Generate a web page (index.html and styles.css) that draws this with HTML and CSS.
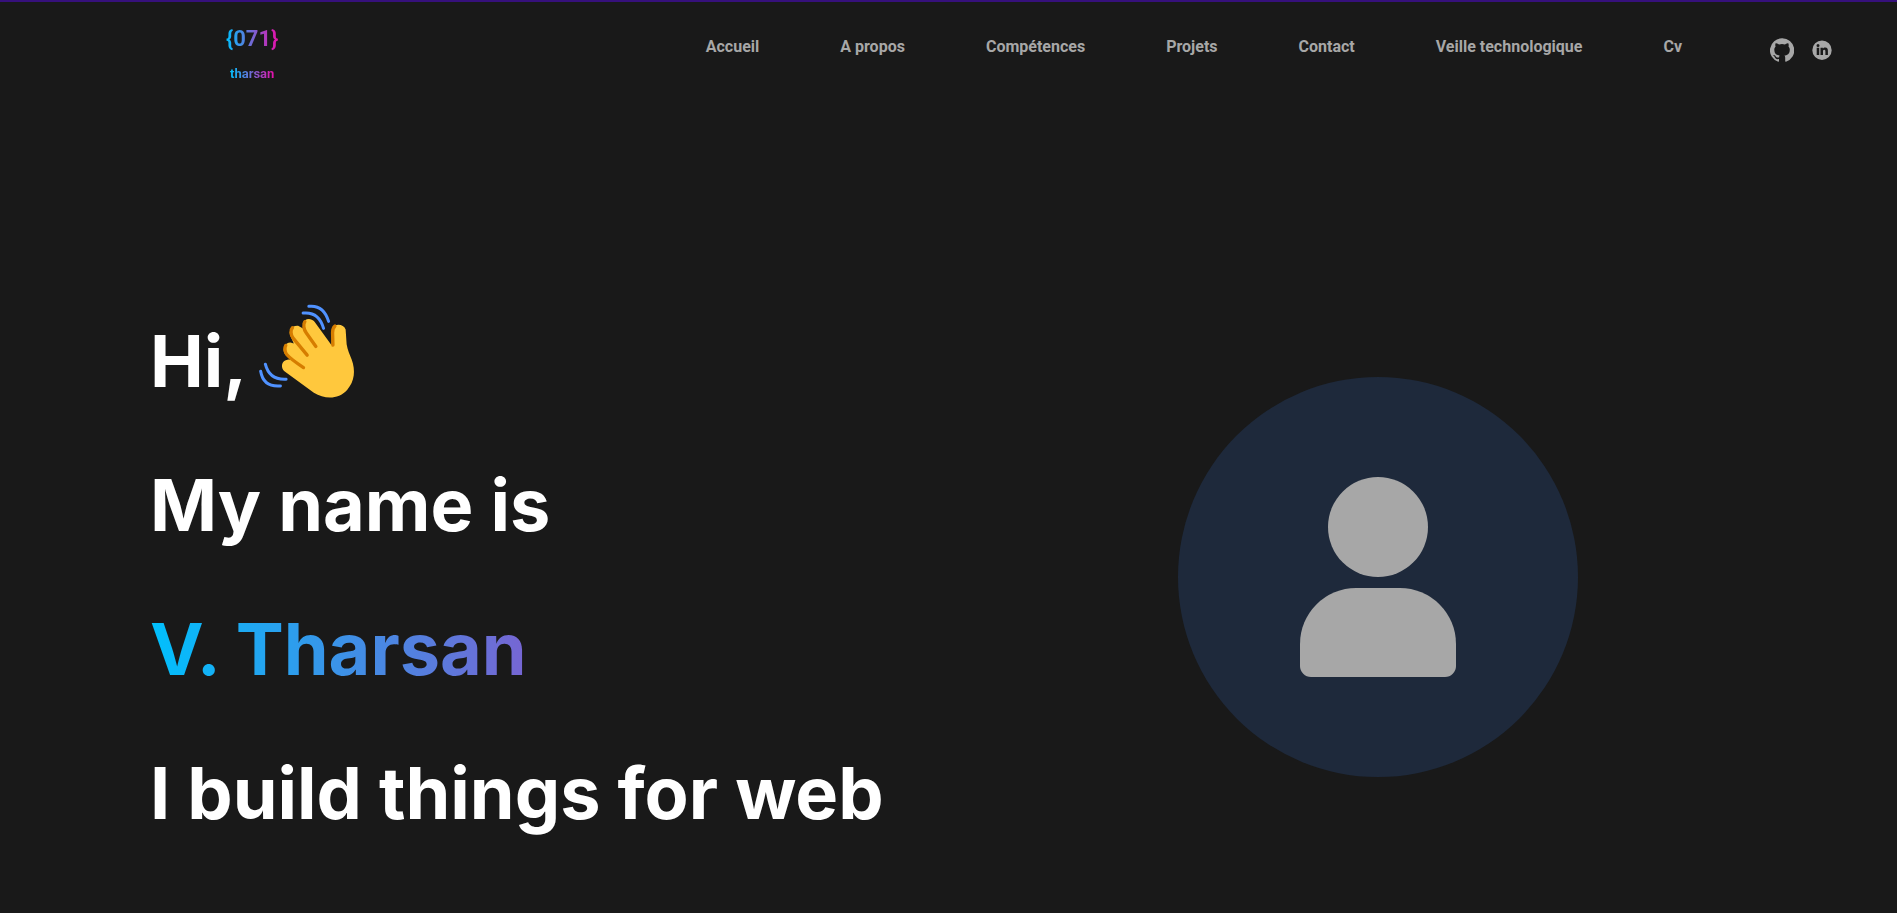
FILE: index.html
```html
<!DOCTYPE html>
<html lang="fr">
<head>
<meta charset="utf-8">
<meta name="viewport" content="width=device-width, initial-scale=1">
<title>V. Tharsan</title>
<link rel="stylesheet" href="styles.css">
</head>
<body>
<header class="header">
  <a class="logo" href="#">
    <span class="logo-mark">{071}</span>
    <span class="logo-name">tharsan</span>
  </a>
  <nav class="nav">
    <ul class="nav-list">
      <li><a href="#accueil">Accueil</a></li>
      <li><a href="#apropos">A propos</a></li>
      <li><a href="#competences">Compétences</a></li>
      <li><a href="#projets">Projets</a></li>
      <li><a href="#contact">Contact</a></li>
      <li><a href="#veille">Veille technologique</a></li>
      <li><a href="#cv">Cv</a></li>
    </ul>
    <div class="social">
      <a href="#github" aria-label="GitHub">
        <svg class="icon" viewBox="0 0 24 24"><path d="M12 .3a12 12 0 0 0-3.8 23.4c.6.1.8-.3.8-.6v-2c-3.3.7-4-1.6-4-1.6-.6-1.4-1.4-1.8-1.4-1.8-1-.7.1-.7.1-.7 1.2 0 1.9 1.2 1.9 1.2 1 1.8 2.8 1.3 3.5 1 0-.8.4-1.3.7-1.6-2.7-.3-5.5-1.3-5.5-6 0-1.2.5-2.3 1.3-3.1-.2-.4-.6-1.6 0-3.2 0 0 1-.3 3.4 1.2a11.500 11.500 0 0 1 6 0c2.300-1.500 3.300-1.200 3.300-1.200.700 1.600.300 2.800.200 3.200.800.800 1.300 1.900 1.300 3.200 0 4.600-2.800 5.600-5.500 5.900.500.400.900 1 .900 2.200v3.300c0 .300.100.700.800.600A12 12 0 0 0 12 .3"/></svg>
      </a>
      <a href="#linkedin" aria-label="LinkedIn">
        <svg class="icon" viewBox="0 0 24 24"><path fill-rule="evenodd" d="M12 2.500a9.700 9.700 0 1 0 0 19.400 9.700 9.700 0 0 0 0-19.400ZM6.700 9.700h2.500V17H6.700ZM8 6a1.500 1.500 0 1 1 0 3 1.500 1.500 0 0 1 0-3ZM10.500 9.700h2.400v1c.4-.7 1.200-1.200 2.300-1.200 2.200 0 2.700 1.500 2.700 3.500V17h-2.500v-3.500c0-.9-.1-1.800-1.200-1.800s-1.200.9-1.200 1.800V17h-2.500Z"/></svg>
      </a>
    </div>
  </nav>
</header>
<main class="hero">
  <h1 class="intro">
    <span class="line">Hi,
      <svg class="wave" viewBox="386 40 290 290" role="img" aria-label="wave">
        <path fill="#ffc83d" d="M463 245C451 235 452 216 466 211C475 207 480 210 480 210L462 190C455 175 464 159 480 158L490 161L480 139C473 122 485 106 503 108L519 117L517 101C521 86 541 83 552 96L603 166L604 118C610 101 638 101 645 119L648 163C651 182 657 193 663 209C675 242 672 274 650 299C622 330 582 327 550 308Z"/>
        <g fill="none" stroke="#d67d00" stroke-width="10" stroke-linecap="round" stroke-linejoin="round">
          <path d="M519 233C493 216 480 207 469 194C463 187 462 173 466 167"/>
          <path d="M530 196L488 145C480 135 480 120 486 114"/>
          <path d="M556 170L527 129C519 118 518 103 523 96"/>
          <path d="M607 166L606 129C606 118 609 112 613 109"/>
        </g>
        <g fill="none" stroke="#5092ff" stroke-width="9" stroke-linecap="round">
          <path d="M535 50Q579 45 594 95M518 70Q565 65 579 116M391 244Q399 292 450 288M405 223Q417 271 467 268"/>
        </g>
      </svg>
    </span>
    <span class="line">My name is</span>
    <span class="line name">V. Tharsan</span>
    <span class="line">I build things for web</span>
  </h1>
  <svg class="avatar" viewBox="0 0 400 400" role="img" aria-label="Portrait">
    <circle cx="200" cy="200" r="200" fill="#1e293b"/>
    <circle cx="200" cy="150" r="50" fill="#a7a7a7"/>
    <path fill="#a7a7a7" d="M178 211h44a56 56 0 0 1 56 56v22a11 11 0 0 1-11 11H133a11 11 0 0 1-11-11v-22a56 56 0 0 1 56-56Z"/>
  </svg>
</main>
</body>
</html>
```
FILE: styles.css
```css
* {
  box-sizing: border-box;
}

body {
  margin: 0;
  min-height: 100vh;
  display: flex;
  flex-direction: column;
  border-top: 2px solid #36107c;
  background: #191919;
  color: #a7a7a7;
  font-family: Roboto, "Liberation Sans", sans-serif;
  font-weight: 700;
}

a {
  color: inherit;
  text-decoration: none;
}

.header {
  display: flex;
  justify-content: space-between;
  padding: 21px 63px 0 226px;
}

.logo {
  display: flex;
  flex-direction: column;
  align-items: center;
  gap: 11px;
}

.logo-mark,
.logo-name,
.name {
  background: linear-gradient(to right, #00c0fd, #e70faa);
  background-clip: text;
  -webkit-background-clip: text;
  color: transparent;
}

.logo-mark {
  font-size: 22px;
  line-height: 32px;
}

.logo-name {
  font-size: 13px;
  line-height: 16px;
}

.nav {
  display: flex;
  align-items: flex-start;
  gap: 88px;
}

.nav-list {
  display: flex;
  gap: 81px;
  margin: 0;
  padding: 12px 0 0;
  list-style: none;
  font-size: 16px;
  line-height: 24px;
}

.social {
  display: flex;
  gap: 16px;
  padding-top: 15px;
}

.icon {
  display: block;
  width: 24px;
  height: 24px;
  fill: currentColor;
}

.hero {
  flex: 1;
  display: grid;
  grid-template-columns: 7fr 6fr;
  align-items: center;
  padding: 158px 150px 0;
}

.intro {
  justify-self: start;
  margin: 0;
  color: #fff;
  font-family: Inter, Roboto, sans-serif;
  font-size: 72px;
  line-height: 144px;
}

.line {
  display: flex;
  align-items: center;
  gap: 12px;
}

.line.name {
  display: block;
}

.wave {
  width: 97px;
  height: 97px;
  margin-bottom: 18px;
}

.avatar {
  justify-self: center;
  width: 400px;
  max-width: 100%;
}
```
